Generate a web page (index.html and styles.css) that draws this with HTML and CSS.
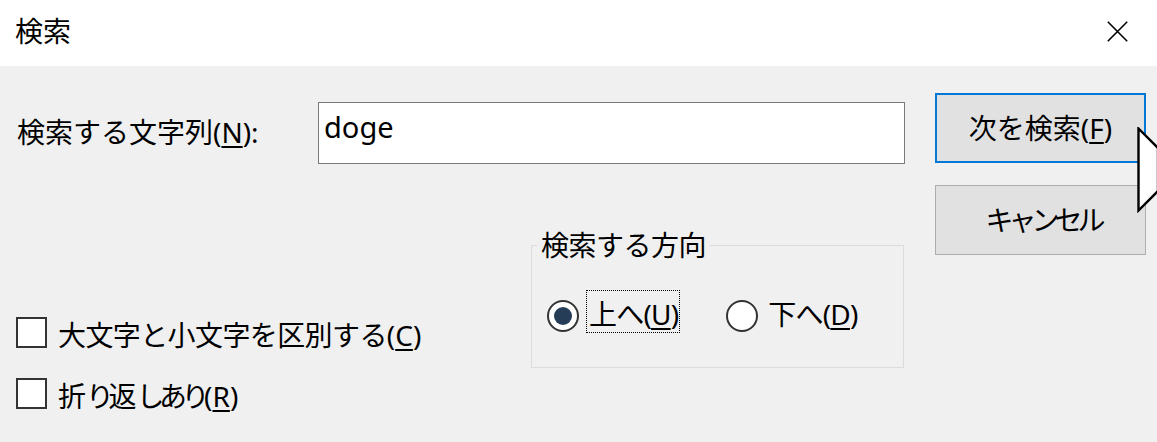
FILE: index.html
```html
<!DOCTYPE html>
<html lang="ja">
<head>
<meta charset="utf-8">
<title>検索</title>
<link rel="stylesheet" href="styles.css">
</head>
<body>
<div class="dialog">
  <div class="titlebar">
    <span class="title">検索</span>
    <svg class="close" width="21" height="21" viewBox="0 0 21 21"><path d="M0.8 0.8L20.2 20.2M20.2 0.8L0.8 20.2" stroke="#000" stroke-width="1.6" fill="none"/></svg>
  </div>
  <div class="content">
    <div class="main">
      <div class="find-row">
        <label class="find-label">検索する文字列(<u>N</u>):</label>
        <div class="text-input">doge</div>
      </div>
      <div class="lower">
        <div class="checks">
          <div class="check"><span class="box"></span><span class="check-label"><span class="tight">大文字と小文字を区別する</span>(<u>C</u>)</span></div>
          <div class="check"><span class="box"></span><span class="check-label">折<span class="kana">り</span>返<span class="kana">しあり</span>(<u>R</u>)</span></div>
        </div>
        <fieldset class="direction">
          <legend>検索する方向</legend>
          <div class="radios">
            <div class="radio-item">
              <span class="radio checked"><span class="dot"></span></span>
              <span class="radio-label focused">上へ(<u>U</u>)</span>
            </div>
            <div class="radio-item">
              <span class="radio"></span>
              <span class="radio-label">下へ(<u>D</u>)</span>
            </div>
          </div>
        </fieldset>
      </div>
    </div>
    <div class="buttons">
      <div class="btn btn-default">次を検索(<u>F</u>)</div>
      <div class="btn btn-kana">キャンセル</div>
    </div>
  </div>
  <svg class="cursor" width="21" height="86" viewBox="0 0 21 86"><polygon points="1.5,1.5 21,21 21,64 1.5,83.5" fill="#fff" stroke="#000" stroke-width="2.4" stroke-linejoin="miter"/></svg>
</div>
</body>
</html>
```

FILE: styles.css
```css
html, body {
  margin: 0;
  padding: 0;
}

body {
  font-family: "Noto Sans", "Noto Sans CJK JP", sans-serif;
  font-size: 28px;
  color: #000;
  background: #f0f0f0;
}

.dialog {
  position: relative;
  width: 1157px;
  height: 442px;
  overflow: hidden;
  background: #f0f0f0;
}

.titlebar {
  height: 66px;
  background: #fff;
  display: flex;
  align-items: center;
  justify-content: space-between;
  padding: 0 29px 0 15px;
  box-sizing: border-box;
}

.title {
  line-height: 30px;
  margin-top: -4px;
}

.close {
  display: block;
  margin-top: -3px;
}

.content {
  display: flex;
  padding: 27px 11px 0 17px;
}

.main {
  width: 888px;
}

.find-row {
  display: flex;
  align-items: center;
  margin-top: 9px;
}

.find-label {
  width: 301px;
  line-height: 30px;
  margin-top: -2px;
}

.text-input {
  width: 587px;
  height: 62px;
  box-sizing: border-box;
  border: 1px solid #7a7a7a;
  background: #fff;
  font-size: 29px;
  line-height: 40px;
  padding: 4px 5px 0;
}

.lower {
  display: flex;
  align-items: flex-start;
}

.checks {
  margin-top: 153px;
  margin-left: -1px;
  display: flex;
  flex-direction: column;
  gap: 30px;
}

.check {
  display: flex;
  align-items: center;
  height: 31px;
}

.box {
  width: 31px;
  height: 31px;
  box-sizing: border-box;
  border: 2px solid #333;
  background: #fff;
  margin-right: 11px;
  flex: none;
}

.check-label {
  line-height: 31px;
  margin-top: 6px;
  white-space: nowrap;
}

.tight {
  letter-spacing: -0.6px;
}

.kana {
  letter-spacing: -5.5px;
}

.direction {
  margin: 66px 1px 0 auto;
  width: 373px;
  box-sizing: border-box;
  border: 1px solid #dcdcdc;
  padding: 30px 0 34px 15px;
}

.direction legend {
  margin-left: -10px;
  padding: 0 4px;
  line-height: 30px;
  letter-spacing: -0.5px;
}

.radios {
  display: flex;
  align-items: flex-start;
  gap: 46px;
}

.radio-item {
  display: flex;
  align-items: flex-start;
}

.radio {
  width: 32px;
  height: 32px;
  box-sizing: border-box;
  border: 2px solid #333;
  border-radius: 50%;
  background: #fff;
  margin-top: 10px;
  margin-right: 7px;
  display: flex;
  align-items: center;
  justify-content: center;
  flex: none;
}

.dot {
  width: 18px;
  height: 18px;
  border-radius: 50%;
  background: #263d57;
}

.radio-label {
  border: 1px dotted transparent;
  padding: 6px 1px 0 2px;
  line-height: 35px;
  letter-spacing: -0.8px;
  white-space: nowrap;
}

.radio-label.focused {
  border-color: #000;
}

.buttons {
  margin-left: 30px;
  width: 211px;
  display: flex;
  flex-direction: column;
  gap: 22px;
}

.btn {
  height: 70px;
  box-sizing: border-box;
  border: 1px solid #adadad;
  background: #e1e1e1;
  display: flex;
  align-items: center;
  justify-content: center;
  line-height: 30px;
}

.btn-default {
  border: 2px solid #0078d7;
}

.btn-kana {
  letter-spacing: -5px;
  padding-left: 5px;
}

u {
  text-decoration-thickness: 1.5px;
  text-underline-offset: 3px;
}

.cursor {
  position: absolute;
  left: 1137px;
  top: 127px;
}
```
